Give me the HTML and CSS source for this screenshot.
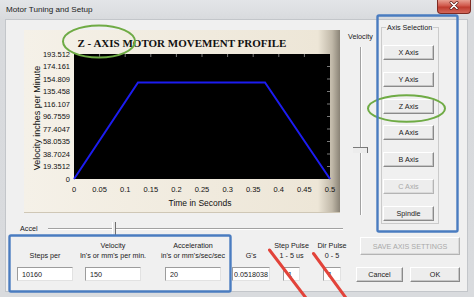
FILE: index.html
```html
<!DOCTYPE html>
<html>
<head>
<meta charset="utf-8">
<title>Motor Tuning and Setup</title>
<link rel="stylesheet" href="styles.css">
</head>
<body>
<div class="window">
  <div class="titlebar">
    <span class="title">Motor Tuning and Setup</span>
    <div class="close">
      <svg width="34" height="14" viewBox="0 0 34 14">
        <path d="M14 3.5 L20 9.5 M20 3.5 L14 9.5" stroke="#5a1d18" stroke-width="3" stroke-linecap="round"/>
        <path d="M14 3.5 L20 9.5 M20 3.5 L14 9.5" stroke="#ffffff" stroke-width="1.6" stroke-linecap="round"/>
      </svg>
    </div>
  </div>
  <div class="client">
    <div class="left">
      <div class="chart">
        <svg width="316" height="183" viewBox="0 0 316 183">
          <text class="chart-title" x="158" y="16.8" text-anchor="middle">Z - AXIS MOTOR MOVEMENT PROFILE</text>
          <rect x="50" y="24" width="256" height="125" fill="#000"/>
          <g stroke="#7a7a7a" stroke-width="1">
            <path d="M75.6 24v3M101.2 24v3M126.8 24v3M152.4 24v3M178 24v3M203.6 24v3M229.2 24v3M254.8 24v3M280.4 24v3"/>
            <path d="M303 36.5h3M303 49h3M303 61.5h3M303 74h3M303 86.5h3M303 99h3M303 111.5h3M303 124h3M303 136.5h3"/>
          </g>
          <polyline points="50,149 114,52.5 241,52.5 306,149" fill="none" stroke="#1c1cf0" stroke-width="2"/>
          <g class="ax-label" text-anchor="end">
            <text x="46" y="26.7">193.512</text>
            <text x="46" y="39.2">174.161</text>
            <text x="46" y="51.7">154.809</text>
            <text x="46" y="64.2">135.458</text>
            <text x="46" y="76.7">116.107</text>
            <text x="46" y="89.2">96.7559</text>
            <text x="46" y="101.7">77.4047</text>
            <text x="46" y="114.2">58.0535</text>
            <text x="46" y="126.7">38.7024</text>
            <text x="46" y="139.2">19.3512</text>
            <text x="46" y="151.7">0</text>
          </g>
          <g class="ax-label" text-anchor="middle">
            <text x="50" y="161.7">0</text>
            <text x="75.6" y="161.7">0.05</text>
            <text x="101.2" y="161.7">0.1</text>
            <text x="126.8" y="161.7">0.15</text>
            <text x="152.4" y="161.7">0.2</text>
            <text x="178" y="161.7">0.25</text>
            <text x="203.6" y="161.7">0.3</text>
            <text x="229.2" y="161.7">0.35</text>
            <text x="254.8" y="161.7">0.4</text>
            <text x="280.4" y="161.7">0.45</text>
            <text x="306" y="161.7">0.5</text>
          </g>
          <text class="ax-title" x="176" y="176" text-anchor="middle">Time in Seconds</text>
          <text class="ax-title ax-title-y" transform="translate(15.5,88) rotate(-90)" text-anchor="middle">Velocity inches per Minute</text>
        </svg>
      </div>
      <div class="accel">
        <span class="accel-label">Accel</span>
        <div class="htrack"><div class="hthumb"></div></div>
      </div>
    </div>

    <div class="velo">
      <span class="velo-label">Velocity</span>
      <div class="vtrack"><div class="vthumb"></div></div>
    </div>

    <div class="axis">
      <div class="group">
        <div class="group-top">
          <span class="gl gl1"></span>
          <span class="legend">Axis Selection</span>
          <span class="gl gl2"></span>
        </div>
        <div class="group-body">
          <button class="btn axis-btn">X Axis</button>
          <button class="btn axis-btn">Y Axis</button>
          <button class="btn axis-btn">Z Axis</button>
          <button class="btn axis-btn">A Axis</button>
          <button class="btn axis-btn">B Axis</button>
          <button class="btn axis-btn disabled">C Axis</button>
          <button class="btn axis-btn">Spindle</button>
        </div>
      </div>
    </div>

    <div class="fields">
      <div class="field f-steps">
        <div class="flabel"><span>Steps per</span></div>
        <input class="tb" type="text" value="10160">
      </div>
      <div class="field f-vel">
        <div class="flabel"><span>Velocity</span><span>In's or mm's per min.</span></div>
        <input class="tb" type="text" value="150">
      </div>
      <div class="field f-acc">
        <div class="flabel"><span>Acceleration</span><span>in's or mm's/sec/sec</span></div>
        <input class="tb" type="text" value="20">
      </div>
      <div class="field f-gs">
        <div class="flabel"><span>G's</span></div>
        <input class="tb tb-tight" type="text" value="0.0518038">
      </div>
      <div class="field f-step">
        <div class="flabel"><span>Step Pulse</span><span>1 - 5 us</span></div>
        <input class="tb" type="text" value="1">
      </div>
      <div class="field f-dir">
        <div class="flabel"><span>Dir Pulse</span><span>0 - 5</span></div>
        <input class="tb" type="text" value="1">
      </div>
    </div>

    <div class="actions">
      <button class="btn save disabled">SAVE AXIS SETTINGS</button>
      <div class="btnrow">
        <button class="btn cancel">Cancel</button>
        <button class="btn ok">OK</button>
      </div>
    </div>
  </div>

  <svg class="annot" width="474" height="297" viewBox="0 0 474 297">
    <ellipse cx="99" cy="41.5" rx="36" ry="16" fill="none" stroke="#6fab45" stroke-width="2"/>
    <ellipse cx="406.5" cy="108.5" rx="38.5" ry="13.3" fill="none" stroke="#6fab45" stroke-width="2"/>
    <rect x="377.5" y="15.5" width="80" height="216" rx="1.5" fill="none" stroke="#4a7cc0" stroke-width="2.4"/>
    <rect x="9.5" y="235.5" width="221" height="56" rx="1.5" fill="none" stroke="#4a7cc0" stroke-width="2.4"/>
    <path d="M269.5 250 L306 298 M313.5 253.5 L346 298" stroke="#e2433a" stroke-width="3" stroke-linecap="round"/>
  </svg>
</div>
</body>
</html>
```

FILE: styles.css
```css
body {
  margin: 0;
  background: #ffffff;
}

.window {
  position: relative;
  width: 474px;
  height: 297px;
  overflow: hidden;
  background: linear-gradient(to bottom, #e3e5e8, #d8dadd 20px, #d9dbde);
  font-family: "Liberation Sans", Arial, sans-serif;
  color: #1a1a1a;
}

.titlebar {
  height: 19px;
  display: flex;
  justify-content: space-between;
  align-items: flex-start;
}

.title {
  margin-left: 6px;
  font-size: 8.1px;
  line-height: 20px;
  color: #1b1b1b;
}

.close {
  width: 34px;
  height: 14px;
  margin-right: 3px;
  box-sizing: border-box;
  border: 1px solid #7d2a22;
  border-top: none;
  border-radius: 0 0 4px 4px;
  background: linear-gradient(to bottom, #e8a092, #d0574a 45%, #bf3b2e 55%, #d2675a);
}

.close svg {
  display: block;
  margin: -1px 0 0 -1px;
}

.client {
  margin-left: 5px;
  width: 463px;
  height: 273px;
  box-sizing: border-box;
  border: 1px solid #c3c6ca;
  background: #f0f0f0;
  display: grid;
  grid-template-columns: 337px 35px 89px;
  grid-template-rows: 216px 55px;
}

/* ---------- chart ---------- */
.left {
  display: flex;
  flex-direction: column;
}

.chart {
  margin: 10px 0 0 18px;
  width: 316px;
  height: 183px;
  background: linear-gradient(to right, #f5f1e8, #ede6d7 93%, #c0b8a8 97.5%, #8a8376);
  box-shadow: inset 0 -1px 0 #cfc7b6;
}

.chart svg {
  display: block;
}

.chart-title {
  font-family: "Liberation Serif", "Times New Roman", serif;
  font-weight: bold;
  font-size: 11px;
  fill: #111;
}

.ax-label {
  font-family: "Liberation Sans", Arial, sans-serif;
  font-size: 7.5px;
  fill: #111;
}

.ax-title {
  font-family: "Liberation Sans", Arial, sans-serif;
  font-size: 8.5px;
  fill: #111;
}

.ax-title-y {
  font-size: 9px;
}

/* ---------- accel slider ---------- */
.accel {
  display: flex;
  align-items: center;
  height: 13px;
  margin-top: 9px;
  padding-left: 14px;
}

.accel-label {
  width: 28px;
  font-size: 7.2px;
}

.htrack {
  position: relative;
  flex: 1;
  height: 0;
  border-top: 1px solid #a2a2a2;
  border-bottom: 1px solid #ffffff;
}

.hthumb {
  position: absolute;
  left: 64px;
  top: -7px;
  width: 2px;
  height: 13px;
  border-left: 1px solid #ffffff;
  border-right: 1px solid #6f6f6f;
  background: #e6e6e6;
}

/* ---------- velocity slider ---------- */
.velo {
  display: flex;
  flex-direction: column;
  align-items: center;
  padding-top: 11.5px;
}

.velo-label {
  font-size: 7.2px;
  line-height: 9px;
}

.vtrack {
  position: relative;
  margin-top: 6.5px;
  width: 0;
  height: 168px;
  border-left: 1px solid #a2a2a2;
  border-right: 1px solid #ffffff;
}

.vthumb {
  position: absolute;
  top: 100px;
  left: -8px;
  width: 14px;
  height: 5px;
  border-top: 1px solid #7a7a7a;
  border-right: 1px solid #6f6f6f;
  background: #ececec;
}

/* ---------- axis group ---------- */
.axis {
  padding: 2.5px 0 0 3px;
}

.group {
  width: 58px;
}

.group-top {
  display: flex;
  align-items: flex-end;
  height: 9px;
}

.gl {
  height: 4.5px;
  box-sizing: border-box;
  border-top: 1px solid #cbcbcb;
}

.gl1 {
  width: 5px;
  border-left: 1px solid #cbcbcb;
}

.gl2 {
  flex: 1;
  border-right: 1px solid #cbcbcb;
}

.legend {
  align-self: flex-start;
  padding: 0 1px;
  font-size: 7.2px;
  line-height: 9px;
  white-space: nowrap;
}

.group-body {
  display: flex;
  flex-direction: column;
  gap: 11.8px;
  padding: 13.5px 0 2.5px 1px;
  border: 1px solid #cbcbcb;
  border-top: none;
}

/* ---------- buttons ---------- */
.btn {
  margin: 0;
  padding: 0;
  box-sizing: border-box;
  font-family: "Liberation Sans", Arial, sans-serif;
  font-size: 7.2px;
  color: #1a1a1a;
  background: #ededed;
  border: 1px solid;
  border-color: #ffffff #8a8a8a #8a8a8a #ffffff;
  box-shadow: inset -1px -1px 0 #c6c6c6;
}

.btn.disabled {
  color: #a9a9a9;
  border-color: #ffffff #b4b4b4 #b4b4b4 #ffffff;
  box-shadow: inset -1px -1px 0 #dadada;
}

.axis-btn {
  width: 51px;
  height: 15px;
}

/* ---------- bottom fields ---------- */
.fields {
  display: flex;
  align-items: flex-start;
  padding: 5px 0 0 11px;
}

.field {
  display: flex;
  flex-direction: column;
  align-items: center;
}

.flabel {
  display: flex;
  flex-direction: column;
  justify-content: flex-end;
  align-items: center;
  height: 20px;
  margin-bottom: 6px;
  font-size: 7.2px;
  line-height: 10px;
  white-space: nowrap;
}

.f-steps { width: 56px; }
.f-vel { width: 56px; margin-left: 12px; }
.f-acc { width: 56px; margin-left: 24px; }
.f-gs { width: 38px; margin-left: 11px; }
.f-step { width: 17px; margin-left: 13px; }
.f-dir { width: 18px; margin-left: 23px; }

.tb {
  width: 100%;
  height: 14px;
  margin: 0;
  padding: 0 0 0 4px;
  box-sizing: border-box;
  border: 1px solid;
  border-color: #9c9c9c #e2e2e2 #e2e2e2 #9c9c9c;
  background: #ffffff;
  font-family: "Liberation Sans", Arial, sans-serif;
  font-size: 7.2px;
  color: #1a1a1a;
  outline: none;
}

.tb-tight {
  padding-left: 1px;
}

/* ---------- actions ---------- */
.actions {
  display: flex;
  flex-direction: column;
  align-items: flex-start;
}

.save {
  margin: 1px 0 0 17px;
  width: 100px;
  height: 18px;
}

.btnrow {
  display: flex;
  gap: 7px;
  margin: 12px 0 0 13px;
}

.cancel {
  width: 47px;
  height: 15px;
}

.ok {
  width: 50px;
  height: 15px;
}

/* ---------- annotations ---------- */
.annot {
  position: absolute;
  left: 0;
  top: 0;
  pointer-events: none;
}
```
